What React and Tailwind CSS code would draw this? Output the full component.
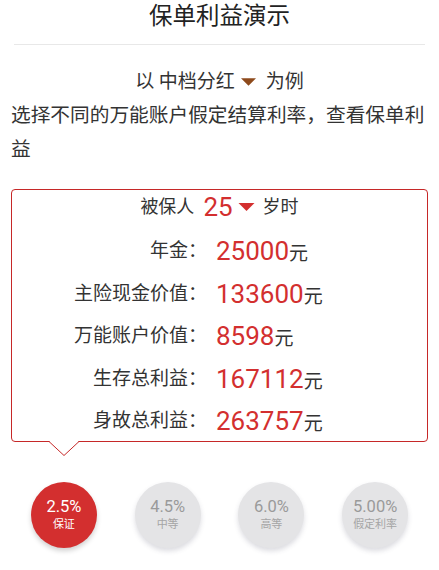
import React from "react";

const FONT = { fontFamily: 'Roboto, "Noto Sans CJK SC", sans-serif' };

function Caret({ color, w = 16, h = 8 }) {
  return (
    <svg width={w} height={h} viewBox="0 0 16 8" className="inline-block">
      <polygon points="0,0 16,0 8,8" fill={color} />
    </svg>
  );
}

const rows = [
  ["年金：", "25000"],
  ["主险现金价值：", "133600"],
  ["万能账户价值：", "8598"],
  ["生存总利益：", "167112"],
  ["身故总利益：", "263757"],
];

const rates = [
  ["2.5%", "保证", true],
  ["4.5%", "中等", false],
  ["6.0%", "高等", false],
  ["5.00%", "假定利率", false],
];

export default function App() {
  return (
    <div className="w-[439px] h-[570px] bg-white text-[#333] overflow-hidden" style={FONT}>
      <div className="h-[34px] flex items-center justify-center text-[23.5px] text-[#222]">
        保单利益演示
      </div>
      <div className="mx-[14px] mt-[10px] h-px bg-[#e8e8e8]" />
      <div className="mt-[20px] h-[34px] flex items-center justify-center text-[19px] text-[#333]">
        <span>以 中档分红</span>
        <span className="ml-[6px] mr-[10px] flex items-center">
          <Caret color="#8e4a1c" w={15} h={8} />
        </span>
        <span>为例</span>
      </div>
      <div className="px-[11px] text-[19.7px] leading-[34px] text-[#333]">
        选择不同的万能账户假定结算利率，查看保单利益
      </div>
      <div className="relative mx-[11px] mt-[22px] border border-[#c62828] rounded-[4px] h-[253px]">
        <div className="h-[33px] flex items-center justify-center text-[18px] text-[#333]">
          <span>被保人</span>
          <span className="ml-[9px] text-[26px] text-[#d32f2f] leading-none">25</span>
          <span className="ml-[5px] mr-[8px] flex items-center">
            <Caret color="#d32f2f" w={17} h={8} />
          </span>
          <span>岁时</span>
        </div>
        <div className="pt-[7px]">
          {rows.map(([label, value]) => (
            <div key={label} className="h-[42.5px] flex items-center">
              <div className="w-[195px] text-right text-[19px] text-[#333]">{label}</div>
              <div className="ml-[9px] flex items-baseline">
                <span className="text-[26px] text-[#d32f2f] leading-none">{value}</span>
                <span className="text-[19px] text-[#333] leading-none">元</span>
              </div>
            </div>
          ))}
        </div>
        <svg
          width="30"
          height="16"
          viewBox="0 0 30 16"
          className="absolute left-[37px] top-full"
        >
          <polygon points="0,0 30,0 15,14.5" fill="#ffffff" />
          <polyline points="0,0.5 15,14.5 30,0.5" fill="none" stroke="#c62828" strokeWidth="1" />
        </svg>
      </div>
      <div className="mt-[40px] px-[12px] grid grid-cols-4">
        {rates.map(([pct, name, active]) => (
          <div key={pct} className="flex justify-center">
            <div
              className={
                active
                  ? "w-[66px] h-[66px] rounded-full bg-[#d32f2f] text-white flex flex-col items-center justify-center shadow-[0_3px_5px_rgba(0,0,0,0.18)]"
                  : "w-[66px] h-[66px] rounded-full bg-[#e4e4e6] text-[#9a9a9a] flex flex-col items-center justify-center shadow-[0_3px_5px_rgba(60,60,90,0.18)]"
              }
            >
              <div className="text-[16.5px] leading-[19px]">{pct}</div>
              <div className={"text-[11px] leading-[16px] mt-[1px] " + (active ? "text-white" : "text-[#a5a5a5]")}>
                {name}
              </div>
            </div>
          </div>
        ))}
      </div>
    </div>
  );
}
